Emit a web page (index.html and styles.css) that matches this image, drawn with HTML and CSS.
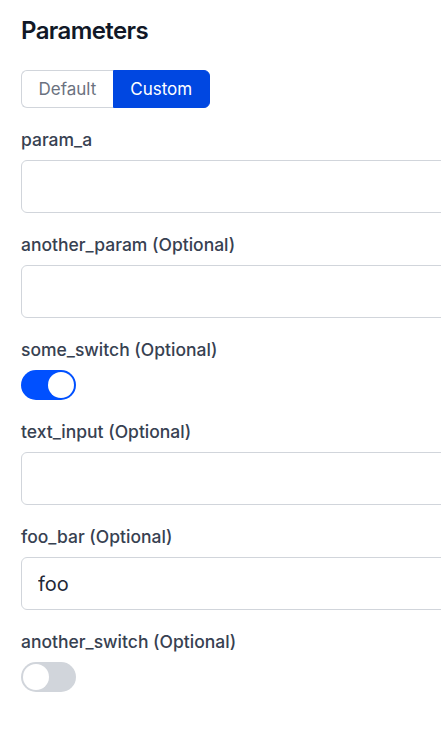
FILE: index.html
```html
<!DOCTYPE html>
<html>
<head>
<meta charset="utf-8">
<link rel="stylesheet" href="styles.css">
</head>
<body>
<div class="panel">
  <h2 class="title">Parameters</h2>
  <div class="segmented">
    <button class="seg">Default</button>
    <button class="seg seg-active">Custom</button>
  </div>
  <div class="fields">
    <div class="field">
      <label class="label">param_a</label>
      <input class="input" type="text">
    </div>
    <div class="field">
      <label class="label">another_param (Optional)</label>
      <input class="input" type="text">
    </div>
    <div class="field">
      <label class="label">some_switch (Optional)</label>
      <span class="switch switch-on"><span class="knob"></span></span>
    </div>
    <div class="field">
      <label class="label">text_input (Optional)</label>
      <input class="input" type="text">
    </div>
    <div class="field">
      <label class="label">foo_bar (Optional)</label>
      <input class="input" type="text" value="foo">
    </div>
    <div class="field">
      <label class="label">another_switch (Optional)</label>
      <span class="switch"><span class="knob"></span></span>
    </div>
  </div>
</div>
</body>
</html>
```
FILE: styles.css
```css
html, body {
  margin: 0;
  padding: 0;
  background: #ffffff;
  overflow: hidden;
}
body {
  font-family: Inter, "Noto Sans", sans-serif;
  color: #374151;
}
.panel {
  padding: 15px 0 0 21px;
  width: 500px;
}
.title {
  margin: 0;
  font-size: 24px;
  line-height: 32px;
  font-weight: 600;
  letter-spacing: -0.6px;
  color: #111827;
}
.segmented {
  display: inline-flex;
  margin-top: 23px;
  height: 38px;
}
.seg {
  font-family: inherit;
  font-size: 17px;
  padding: 0 16.5px;
  border: 1px solid #d1d5db;
  background: #ffffff;
  color: #6b7280;
  cursor: pointer;
}
.seg:first-child {
  border-radius: 6px 0 0 6px;
  border-right: none;
}
.seg-active {
  background: #0047e1;
  border-color: #0047e1;
  color: #ffffff;
  border-radius: 0 6px 6px 0;
}
.fields {
  display: flex;
  flex-direction: column;
  gap: 20px;
  margin-top: 20px;
}
.field {
  display: flex;
  flex-direction: column;
  align-items: flex-start;
  gap: 8px;
}
.label {
  font-size: 17.5px;
  line-height: 24px;
  font-weight: 500;
  color: #374151;
}
.input {
  box-sizing: border-box;
  width: 480px;
  height: 53px;
  border: 1px solid #d1d5db;
  border-radius: 6px;
  padding: 0 16px;
  font-family: inherit;
  font-size: 20px;
  color: #1f2937;
  background: #fff;
  outline: none;
}
.switch {
  box-sizing: border-box;
  display: flex;
  align-items: center;
  width: 55px;
  height: 30px;
  padding: 2px;
  border-radius: 15px;
  background: #d1d5db;
}
.switch-on {
  background: #0050ff;
  justify-content: flex-end;
}
.knob {
  width: 26px;
  height: 26px;
  border-radius: 50%;
  background: #ffffff;
}
```
